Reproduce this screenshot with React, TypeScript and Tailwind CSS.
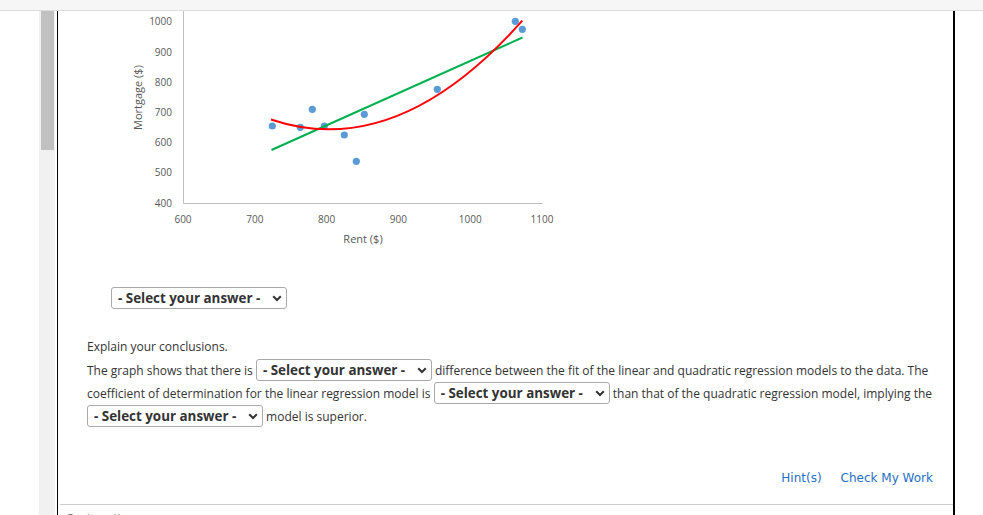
import React from 'react';

const points: [number, number][] = [
  [272.3, 126],
  [300.3, 127.3],
  [312.3, 109.3],
  [324.3, 126],
  [344.3, 135],
  [356.3, 161.3],
  [364.3, 114.3],
  [437.3, 89.3],
  [515.3, 21.3],
  [522.3, 29.3],
];

const yTicks = [1000, 900, 800, 700, 600, 500, 400];
const xTicks = [600, 700, 800, 900, 1000, 1100];

function Chart() {
  // page coordinates, shifted into the svg box (x 58, y 11)
  return (
    <svg width="540" height="240" className="block">
      <g transform="translate(-58,-11)" fontFamily="'Open Sans', sans-serif" fill="#595959">
        <line x1="183.5" y1="10" x2="183.5" y2="203.5" stroke="#bfbfbf" strokeWidth="1" />
        <line x1="183.5" y1="203.5" x2="543" y2="203.5" stroke="#bfbfbf" strokeWidth="1" />
        {yTicks.map((v) => (
          <text key={v} x="172" y={203 - (v - 400) * 0.302 + 3.5} fontSize="10" textAnchor="end">
            {v}
          </text>
        ))}
        {xTicks.map((v) => (
          <text key={v} x={183 + (v - 600) * 0.718} y="222.5" fontSize="10" textAnchor="middle">
            {v}
          </text>
        ))}
        <text x="363" y="243" fontSize="11" textAnchor="middle">
          Rent ($)
        </text>
        <text x="142" y="97.5" fontSize="11" textAnchor="middle" transform="rotate(-90 142 97.5)">
          Mortgage ($)
        </text>
        {points.map(([x, y], i) => (
          <circle key={i} cx={x} cy={y} r="3.6" fill="#5b9bd5" />
        ))}
        <line x1="271.5" y1="150" x2="522.5" y2="37.5" stroke="#00b050" strokeWidth="2" />
        <path d="M271 119.5 Q396.65 162 522.3 20.7" fill="none" stroke="#ff0000" strokeWidth="2" />
      </g>
    </svg>
  );
}

function AnswerSelect() {
  return (
    <span className="relative inline-block align-top">
      <select className="appearance-none block h-[22px] w-[176px] border border-[#a9a9a9] rounded-[3px] bg-white pl-[6px] pr-[20px] text-[13.4px] font-bold text-[#333] font-['Open_Sans'] leading-[20px]">
        <option>- Select your answer -</option>
      </select>
      <svg
        className="absolute right-[5px] top-[8px] pointer-events-none"
        width="10"
        height="7"
        viewBox="0 0 10 7"
      >
        <path d="M1.2 1.3 L5 5 L8.8 1.3" fill="none" stroke="#333" strokeWidth="2" />
      </svg>
    </span>
  );
}

export default function App() {
  return (
    <div className="w-[983px] h-[515px] overflow-hidden bg-white font-['Open_Sans',sans-serif] text-[#333]">
      <div className="h-[11px] bg-[#f6f6f6] border-b border-[#dcdcdc]" />
      <div className="flex h-[530px]">
        <div className="w-[39px]" />
        <div className="w-[16px] bg-[#f1f1f1]">
          <div className="ml-[2px] w-[13px] h-[139px] bg-[#c1c1c1]" />
        </div>
        <div className="w-[2px]" />
        <div className="w-[898px] border-l border-black border-r-2 flex flex-col">
          <div className="h-[493px] flex flex-col">
            <Chart />

            <div className="ml-[53px] mt-[36px] flex">
              <AnswerSelect />
            </div>

            <div className="ml-[29px] mt-[26px] w-[850px] text-[12px] leading-[23px]">
              <p>Explain your conclusions.</p>
              <p className="mt-[1px]">
                The graph shows that there is <AnswerSelect /> difference between the fit of the linear and
                quadratic regression models to the data. The coefficient of determination for the linear
                regression model is <AnswerSelect /> than that of the quadratic regression model, implying
                the <AnswerSelect /> model is superior.
              </p>
            </div>

            <div className="flex-1" />

            <div className="flex justify-end gap-[19px] pr-[20px] pb-[17px] font-['DejaVu_Sans',sans-serif] text-[12px] text-[#1f6fc5]">
              <a>Hint(s)</a>
              <a>Check My Work</a>
            </div>
          </div>

          <div className="ml-[2px] border-t border-[#cccccc] flex items-center gap-[12px] pl-[6px] pt-[5px] text-[11px] text-[#8a8a8a]">
            <span className="w-[9px] h-[9px] rounded-full bg-[#666]" />
            <span>Item Key</span>
          </div>
        </div>
      </div>
    </div>
  );
}
